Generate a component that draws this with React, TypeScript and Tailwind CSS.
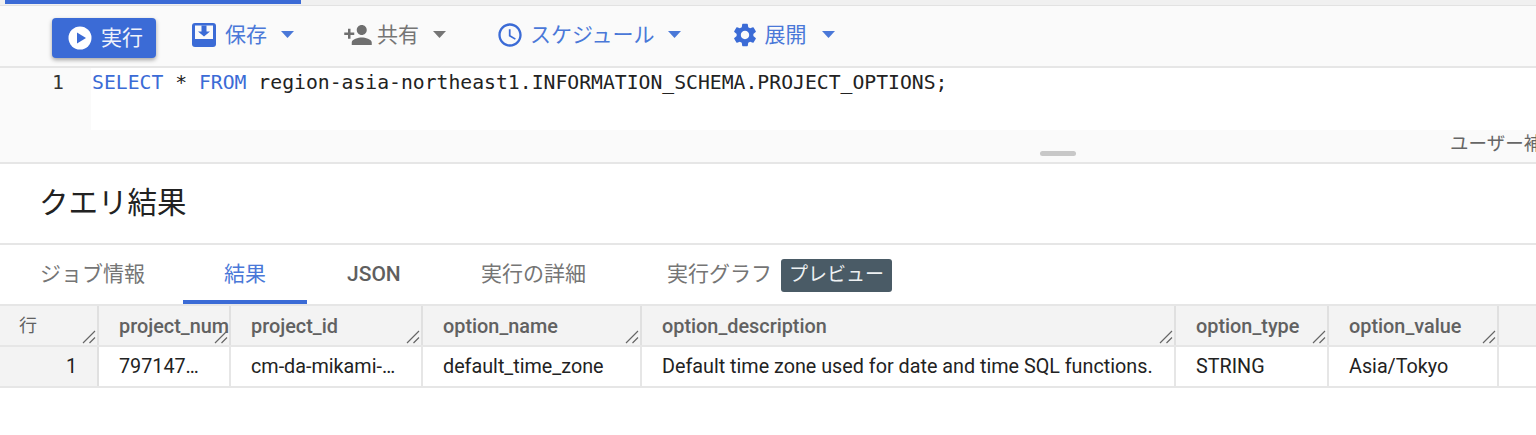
import React from "react";
import { MdPersonAdd, MdAccessTime, MdSettings } from "react-icons/md";

const sans = "font-['Roboto','Noto_Sans_CJK_JP',sans-serif]";

function Caret({ className }: { className: string }) {
  return (
    <svg viewBox="0 0 13 7" className={`w-[13px] h-[7px] ${className}`}>
      <path d="M0 0 H13 L6.5 7 Z" fill="currentColor" />
    </svg>
  );
}

function SaveIcon() {
  return (
    <svg viewBox="0 0 24 24" className="mt-[1px] w-[24px] h-[24px] text-[#3b6bd6]">
      <rect x="0" y="0" width="24" height="24" rx="3" fill="currentColor" />
      <path fill="#fafafa" d="M3 2.5H21V16H3Z" />
      <path fill="currentColor" d="M9.5 2.5H14.5V8.5H18L12 13.5L6 8.5H9.5Z" />
    </svg>
  );
}

function ToolItem({
  icon,
  label,
  color,
  ml,
  caretMl,
  gap,
}: {
  icon: React.ReactNode;
  label: string;
  color: string;
  ml: string;
  caretMl: string;
  gap: string;
}) {
  return (
    <div className={`flex items-center ${ml} ${color}`}>
      {icon}
      <span className={`${gap} text-[21px] leading-[28px]`}>{label}</span>
      <Caret className={caretMl} />
    </div>
  );
}

function Resize() {
  return (
    <svg viewBox="0 0 14 14" className="absolute right-[1px] bottom-[1px] w-[14px] h-[14px] text-[#666]">
      <path d="M1 13 L13 1 M7.5 13 L13 7.5" stroke="currentColor" strokeWidth="1.2" fill="none" />
    </svg>
  );
}

const cols = [
  { name: "project_num", value: "797147…", w: "w-[132px]" },
  { name: "project_id", value: "cm-da-mikami-…", w: "w-[192px]" },
  { name: "option_name", value: "default_time_zone", w: "w-[219px]" },
  { name: "option_description", value: "Default time zone used for date and time SQL functions.", w: "w-[534px]" },
  { name: "option_type", value: "STRING", w: "w-[153px]" },
  { name: "option_value", value: "Asia/Tokyo", w: "w-[170px]" },
];

export default function App() {
  return (
    <div className={`w-[1536px] h-[435px] overflow-hidden bg-white ${sans}`}>
      <div className="h-[6px] bg-[#f0f0f0] border-b border-[#e2e2e2]">
        <div className="ml-[5px] w-[296px] h-[4px] bg-[#3b6bd6]" />
      </div>

      <div className="h-[62px] bg-[#fafafa] border-b-2 border-[#e6e6e6] flex items-center pb-[3px]">
        <button className="ml-[52px] mt-[6px] w-[104px] h-[40px] rounded-[4px] bg-[#3b6bd6] shadow-[0_2px_4px_rgba(0,0,0,0.35)] flex items-center text-[#f0f3fb]">
          <svg viewBox="0 0 24 24" className="ml-[16px] w-[24px] h-[24px]">
            <circle cx="12" cy="12" r="11.5" fill="#fff" />
            <path d="M9 6.5 L18 12 L9 17.5 Z" fill="#3b6bd6" />
          </svg>
          <span className="ml-[9px] text-[21px] leading-[28px]">実行</span>
        </button>
        <ToolItem
          icon={<SaveIcon />}
          label="保存"
          color="text-[#4a78d8]"
          ml="ml-[36px]"
          gap="ml-[9px]"
          caretMl="ml-[14px]"
        />
        <ToolItem
          icon={<MdPersonAdd className="w-[30px] h-[30px] text-[#6f6f6f]" />}
          label="共有"
          color="text-[#757575]"
          ml="ml-[49px]"
          gap="ml-[4px]"
          caretMl="ml-[14px]"
        />
        <ToolItem
          icon={<MdAccessTime className="w-[28px] h-[28px] text-[#3b6bd6]" />}
          label="スケジュール"
          color="text-[#4a78d8]"
          ml="ml-[50px]"
          gap="ml-[6px]"
          caretMl="ml-[13px]"
        />
        <ToolItem
          icon={<MdSettings className="w-[28px] h-[28px] text-[#3b6bd6]" />}
          label="展開"
          color="text-[#4a78d8]"
          ml="ml-[50px]"
          gap="ml-[6px]"
          caretMl="ml-[15px]"
        />
      </div>

      <div className="flex h-[62px] bg-[#fafafa] font-['DejaVu_Sans_Mono',monospace] text-[19.74px] leading-[26px]">
        <div className="w-[91px] shrink-0 pr-[27px] pt-[2px] text-right text-[#333]">1</div>
        <div className="flex-1 bg-white pl-[1px] pt-[2px] text-[#222] whitespace-pre">
          <span className="text-[#3b6bd6]">SELECT</span> * <span className="text-[#3b6bd6]">FROM</span> region-asia-northeast1.INFORMATION_SCHEMA.PROJECT_OPTIONS;
        </div>
      </div>

      <div className="relative h-[34px] bg-[#fafafa] border-b-2 border-[#e6e6e6] overflow-hidden">
        <div className="absolute left-[1040px] top-[21px] w-[36px] h-[5px] rounded-full bg-[#c8c8c8]" />
        <span className="absolute left-[1450px] top-[1px] text-[18.5px] leading-[26px] text-[#666] whitespace-nowrap">ユーザー補助</span>
      </div>

      <div className="h-[81px] pl-[39px] pt-[19px] text-[29.5px] leading-[40px] text-[#222] border-b-2 border-[#e6e6e6]">クエリ結果</div>

      <div className="flex h-[59px] items-stretch text-[21px] text-[#757575]">
        <div className="ml-[40px] w-[143px] flex items-center">ジョブ情報</div>
        <div className="w-[124px] flex items-center justify-center text-[#4a78d8] border-b-[4px] border-[#3b6bd6] box-border pt-[4px]">結果</div>
        <div className="ml-[40px] w-[134px] flex items-center font-medium text-[#5f5f5f]">JSON</div>
        <div className="w-[186px] flex items-center">実行の詳細</div>
        <div className="flex items-center">
          <span>実行グラフ</span>
          <span className="ml-[9px] mt-[2px] h-[33px] w-[111px] rounded-[3px] bg-[#4a5b66] text-[#eef1f3] text-[19px] flex items-center justify-center">プレビュー</span>
        </div>
      </div>

      <div className="border-t-2 border-[#e6e6e6] text-[19.75px]">
        <div className="flex h-[41px] bg-[#f3f3f3] border-b-2 border-[#e6e6e6] font-medium text-[#616161] text-[19.85px]">
          <div className="relative w-[99px] shrink-0 border-r-2 border-[#e0e0e0] pl-[19px] pt-[5px] font-normal text-[18px] leading-[30px]">
            行
            <Resize />
          </div>
          {cols.map((c) => (
            <div key={c.name} className={`relative ${c.w} shrink-0 border-r-2 border-[#e0e0e0] pl-[20px] pt-[6px] leading-[30px] overflow-hidden whitespace-nowrap`}>
              {c.name}
              <Resize />
            </div>
          ))}
        </div>
        <div className="flex h-[41px] border-b-2 border-[#e6e6e6] text-[#222]">
          <div className="w-[99px] shrink-0 bg-[#f3f3f3] border-r-2 border-[#e0e0e0] pr-[20px] text-right leading-[40px]">1</div>
          {cols.map((c) => (
            <div key={c.name} className={`${c.w} shrink-0 border-r-2 border-[#e6e6e6] pl-[20px] leading-[40px] overflow-hidden whitespace-nowrap`}>
              {c.value}
            </div>
          ))}
        </div>
      </div>
    </div>
  );
}
